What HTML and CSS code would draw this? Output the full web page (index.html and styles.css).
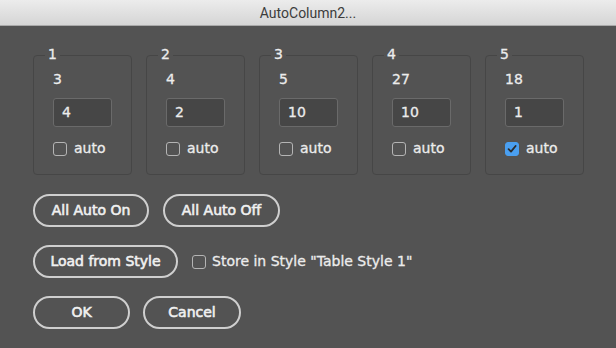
FILE: index.html
```html
<!DOCTYPE html>
<html>
<head>
<meta charset="utf-8">
<link rel="stylesheet" href="styles.css">
</head>
<body>
<div class="dialog">
  <div class="titlebar">AutoColumn2...</div>
  <div class="content">
    <div class="columns">
      <div class="col"><span class="legend">1</span><div class="val">3</div><div class="input">4</div><label class="chk"><span class="box"></span>auto</label></div>
      <div class="col"><span class="legend">2</span><div class="val">4</div><div class="input">2</div><label class="chk"><span class="box"></span>auto</label></div>
      <div class="col"><span class="legend">3</span><div class="val">5</div><div class="input">10</div><label class="chk"><span class="box"></span>auto</label></div>
      <div class="col"><span class="legend">4</span><div class="val">27</div><div class="input">10</div><label class="chk"><span class="box"></span>auto</label></div>
      <div class="col"><span class="legend">5</span><div class="val">18</div><div class="input">1</div><label class="chk"><span class="box checked"><svg viewBox="0 0 14 14" width="14" height="14"><path d="M3.6 7.2 L6 9.6 L10.6 4" fill="none" stroke="#2b2b2b" stroke-width="1.8" stroke-linecap="round" stroke-linejoin="round"/></svg></span>auto</label></div>
    </div>
    <div class="row r1">
      <div class="btn w116">All Auto On</div>
      <div class="btn w117">All Auto Off</div>
    </div>
    <div class="row r2">
      <div class="btn w145">Load from Style</div>
      <label class="chk store"><span class="box"></span>Store in Style "Table Style 1"</label>
    </div>
    <div class="row r3">
      <div class="btn w97">OK</div>
      <div class="btn w98">Cancel</div>
    </div>
  </div>
</div>
</body>
</html>
```
FILE: styles.css
```css
html, body {
  margin: 0;
  padding: 0;
  background: #535353;
}
.dialog {
  width: 616px;
  height: 348px;
  overflow: hidden;
  background: #535353;
  font-family: "DejaVu Sans", sans-serif;
  color: #ececec;
}
.titlebar {
  height: 25px;
  border-bottom: 1px solid #a9a9a9;
  background: linear-gradient(#ececec, #d5d5d5);
  color: #3c3c3c;
  font-family: Roboto, "Liberation Sans", sans-serif;
  font-size: 14px;
  line-height: 26px;
  text-align: center;
}
.content {
  padding: 29px 0 0 33px;
  -webkit-text-stroke: 0.3px currentColor;
}
.columns {
  display: flex;
  gap: 14px;
}
.col {
  position: relative;
  box-sizing: border-box;
  width: 99px;
  height: 120px;
  border: 1px solid #464646;
  border-radius: 4px;
  padding: 15px 0 0 19px;
  font-size: 14px;
}
.legend {
  position: absolute;
  top: -10px;
  left: 11px;
  padding: 0 3px;
  background: #535353;
  line-height: 17px;
}
.val {
  line-height: 17px;
  height: 17px;
}
.input {
  box-sizing: border-box;
  width: 59px;
  height: 29px;
  margin-top: 10px;
  background: #464646;
  border: 1px solid #6a6a6a;
  border-radius: 3px;
  padding-left: 8px;
  line-height: 27px;
}
.chk {
  display: flex;
  align-items: center;
  gap: 7px;
  margin-top: 13px;
  line-height: 17px;
  font-size: 14px;
}
.box {
  box-sizing: border-box;
  width: 14px;
  height: 14px;
  border: 1px solid #b4b4b4;
  border-radius: 3px;
  display: block;
  flex: none;
}
.box.checked {
  background: #4a9ff0;
  border-color: #4a9ff0;
}
.box.checked svg {
  display: block;
  margin: -1px;
}
.row {
  display: flex;
  align-items: center;
  gap: 14px;
}
.r1 { margin-top: 19px; }
.r2 { margin-top: 18px; }
.r3 { margin-top: 18px; gap: 13px; }
.btn {
  box-sizing: border-box;
  height: 33px;
  border: 2px solid #cfcfcf;
  border-radius: 17px;
  text-align: center;
  line-height: 29px;
  font-size: 14px;
  color: #f0f0f0;
  -webkit-text-stroke: 0.6px currentColor;
}
.w116 { width: 116px; }
.w117 { width: 117px; }
.w145 { width: 145px; }
.w97 { width: 97px; }
.w98 { width: 98px; }
.chk.store {
  margin-top: 0;
  gap: 6px;
}
```
